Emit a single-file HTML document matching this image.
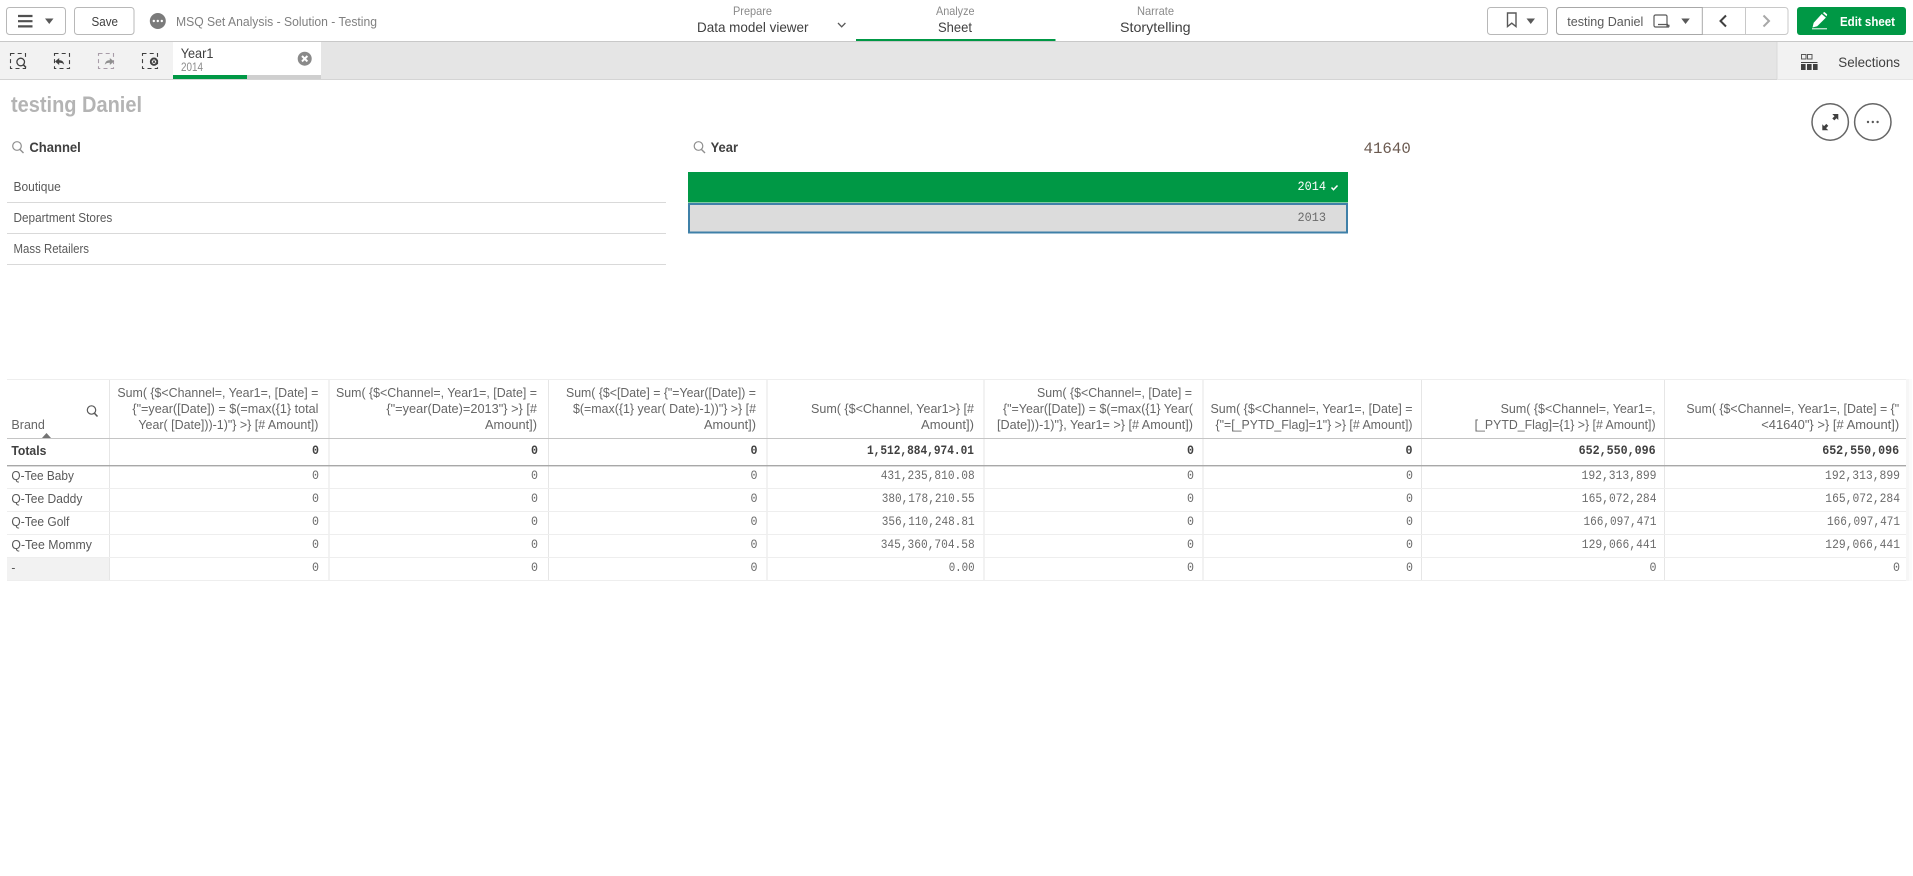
<!DOCTYPE html>
<html lang="en">
<head>
<meta charset="utf-8">
<title>MSQ Set Analysis - Solution - Testing</title>
<style>
html,body{margin:0;padding:0;background:#fff;width:1913px;height:876px;overflow:hidden}
svg{display:block}
text{font-family:"Liberation Sans",sans-serif;fill:#595959;font-size:13px;white-space:pre}
.n{font-family:"Liberation Mono",monospace;font-size:13px;fill:#6b6b6b;text-anchor:end}
.nb{font-family:"Liberation Mono",monospace;font-size:13px;font-weight:700;fill:#404040;text-anchor:end}
.h{fill:#666;text-anchor:end}
.k{fill:#404040}
</style>
</head>
<body>
<svg width="1913" height="876" viewBox="0 0 1913 876" xmlns="http://www.w3.org/2000/svg">
<rect width="1913" height="876" fill="#fff"/>

<!-- top bar -->
<rect x="6.5" y="7.5" width="59" height="27" rx="3" fill="#fff" stroke="#b8b8b8"/>
<path d="M18 16h14.5M18 21.2h14.5M18 26.4h14.5" stroke="#505050" stroke-width="2.2" fill="none"/>
<path d="M45 18.5h8.5l-4.25 5.5z" fill="#595959"/>
<rect x="74.5" y="7.5" width="59.5" height="27" rx="3" fill="#fff" stroke="#b8b8b8"/>
<text x="91.5" y="26" textLength="26.5" lengthAdjust="spacingAndGlyphs" class="k">Save</text>
<circle cx="157.8" cy="21" r="8" fill="#7b7b7b"/>
<circle cx="153.8" cy="21" r="1.2" fill="#fff"/><circle cx="157.8" cy="21" r="1.2" fill="#fff"/><circle cx="161.8" cy="21" r="1.2" fill="#fff"/>
<text x="176" y="26" textLength="201" lengthAdjust="spacingAndGlyphs" style="fill:#808080">MSQ Set Analysis - Solution - Testing</text>

<text x="733" y="15" textLength="39" lengthAdjust="spacingAndGlyphs" style="font-size:12px;fill:#8a8a8a">Prepare</text>
<text x="697" y="32" textLength="111.5" lengthAdjust="spacingAndGlyphs" style="font-size:14px" class="k">Data model viewer</text>
<path d="M838 23l3.7 3.8 3.7-3.8" fill="none" stroke="#595959" stroke-width="1.3"/>
<text x="936" y="15" textLength="38.5" lengthAdjust="spacingAndGlyphs" style="font-size:12px;fill:#8a8a8a">Analyze</text>
<text x="938" y="32" textLength="34" lengthAdjust="spacingAndGlyphs" style="font-size:14px" class="k">Sheet</text>
<text x="1137" y="15" textLength="37" lengthAdjust="spacingAndGlyphs" style="font-size:12px;fill:#8a8a8a">Narrate</text>
<text x="1120" y="32" textLength="70.6" lengthAdjust="spacingAndGlyphs" style="font-size:14px" class="k">Storytelling</text>
<rect x="856" y="39" width="199.5" height="2.4" fill="#009845"/>

<rect x="1487.5" y="7.5" width="60" height="27" rx="3" fill="#fff" stroke="#b8b8b8"/>
<path d="M1507.5 13h8.5v13.6l-4.25-3.4-4.25 3.4z" fill="none" stroke="#595959" stroke-width="1.4"/>
<path d="M1526.5 18.5h8.5l-4.25 5.5z" fill="#595959"/>
<rect x="1556.5" y="7.5" width="231.5" height="27" rx="3" fill="#fff" stroke="#c8c8c8"/>
<path d="M1556.5 10.5a3 3 0 0 1 3-3h142.8v27h-142.8a3 3 0 0 1-3-3z" fill="none" stroke="#a8a8a8"/>
<path d="M1745.5 7.5v27" stroke="#c8c8c8"/>
<text x="1567.3" y="26" textLength="76" lengthAdjust="spacingAndGlyphs" style="fill:#595959">testing Daniel</text>
<path d="M1667 26v-9.5a1.5 1.5 0 0 0-1.5-1.5h-10a1.5 1.5 0 0 0-1.5 1.5v9a1.5 1.5 0 0 0 1.5 1.5h13a1.5 1.5 0 0 0 .3-1.8z M1658 24.5h10" fill="none" stroke="#595959" stroke-width="1.2"/>
<path d="M1681.3 18.5h8.5l-4.25 5.5z" fill="#595959"/>
<path d="M1726 15.5l-5.5 5.5 5.5 5.5" fill="none" stroke="#404040" stroke-width="2"/>
<path d="M1763.5 15.5l5.5 5.5-5.5 5.5" fill="none" stroke="#a8a8a8" stroke-width="2"/>
<rect x="1797" y="7" width="109" height="28" rx="3" fill="#009845"/>
<path d="M1812.5 27.5l1.2-4.8 8-8.7 4.2 3.6-8.7 8.7z" fill="#fff"/>
<path d="M1822.8 13l1.6-1 2.8 2.4-.6 2z" fill="#fff"/>
<path d="M1812 28.8h15" stroke="#fff" stroke-width="1"/>
<text x="1840" y="26" textLength="55" lengthAdjust="spacingAndGlyphs" font-weight="700" style="fill:#fff">Edit sheet</text>

<rect x="0" y="41" width="1913" height="1.2" fill="#c8c8c8"/>

<!-- toolbar -->
<rect x="0" y="42" width="1913" height="37" fill="#e5e5e5"/>
<rect x="0" y="42" width="173" height="37" fill="#f2f2f2"/>
<rect x="1777" y="42" width="136" height="37" fill="#f2f2f2"/>
<rect x="1776.5" y="42" width="1" height="37" fill="#d9d9d9"/>
<rect x="0" y="79" width="1777" height="1" fill="#d4d4d4"/>
<rect x="1777" y="79" width="136" height="1" fill="#e6e6e6"/>

<g fill="none" stroke="#3f3f3f" stroke-width="1.1" stroke-dasharray="4 3.2">
<rect x="10.5" y="53.5" width="15" height="15"/>
<rect x="54.5" y="53.5" width="15" height="15"/>
<rect x="142.5" y="53.5" width="15" height="15"/>
</g>
<rect x="98.5" y="53.5" width="15" height="15" fill="none" stroke="#a89ca8" stroke-width="1.1" stroke-dasharray="4 3.2"/>
<rect x="15" y="58" width="12" height="8.5" fill="#f2f2f2"/>
<circle cx="20.7" cy="62" r="3.8" fill="none" stroke="#404040" stroke-width="1.3"/>
<path d="M23.4 64.8l2.6 2.7" stroke="#404040" stroke-width="1.5"/>
<path d="M55 61.5l4.2-3.5v2.2c2.8 0 4.5 1.2 5 4.6-1.2-1.6-2.8-2-5-2V65z" fill="#404040"/>
<path d="M114 61.5l-4.2-3.5v2.2c-2.8 0-4.5 1.2-5 4.6 1.2-1.6 2.8-2 5-2V65z" fill="#8f8f8f"/>
<circle cx="154" cy="61.7" r="3.2" fill="#fff" stroke="#404040" stroke-width="1.9"/>
<path d="M152.7 60.4l2.6 2.6M155.3 60.4l-2.6 2.6" stroke="#404040" stroke-width=".9"/>

<rect x="173" y="42" width="148" height="37" fill="#fff"/>
<rect x="173" y="75" width="148" height="4" fill="#cfcfcf"/>
<rect x="173" y="75" width="74" height="4" fill="#009845"/>
<text x="180.7" y="58" textLength="32.7" lengthAdjust="spacingAndGlyphs" style="font-size:14px;fill:#404040">Year1</text>
<text x="181" y="71" textLength="22" lengthAdjust="spacingAndGlyphs" style="font-size:12px;fill:#8c8c8c">2014</text>
<circle cx="304.7" cy="58.7" r="7" fill="#8a8a8a"/>
<path d="M302 56l5.4 5.4M307.4 56L302 61.4" stroke="#fff" stroke-width="2"/>

<rect x="1801.5" y="54.5" width="4.5" height="4.5" fill="none" stroke="#595959"/>
<rect x="1807.5" y="54.5" width="4.5" height="4.5" fill="none" stroke="#595959"/>
<path d="M1801 62.5h16.5" stroke="#404040"/>
<rect x="1801" y="64" width="4.6" height="6" fill="#404040"/>
<rect x="1807" y="64" width="4.6" height="6" fill="#404040"/>
<rect x="1813" y="64" width="4.6" height="6" fill="#404040"/>
<text x="1838.3" y="67" textLength="61.7" lengthAdjust="spacingAndGlyphs" style="font-size:14px" class="k">Selections</text>

<!-- title -->
<text x="11" y="112" textLength="131" lengthAdjust="spacingAndGlyphs" font-weight="700" style="font-size:22px;fill:#b4b4b4">testing Daniel</text>

<circle cx="1830.2" cy="122" r="18.2" fill="#fff" stroke="#666" stroke-width="1.5"/>
<circle cx="1872.8" cy="122" r="18.2" fill="#fff" stroke="#666" stroke-width="1.5"/>
<path d="M1832.3 114h6v6l-1.8-1.8-2.2 2.2-2-2 2.2-2.2z" fill="#404040"/>
<path d="M1828.3 130.3h-6v-6l1.8 1.8 2.2-2.2 2 2-2.2 2.2z" fill="#404040"/>
<circle cx="1868" cy="122" r="1.2" fill="#595959"/><circle cx="1872.8" cy="122" r="1.2" fill="#595959"/><circle cx="1877.6" cy="122" r="1.2" fill="#595959"/>

<!-- channel filter -->
<circle cx="17" cy="146" r="4.3" fill="none" stroke="#8f8f8f" stroke-width="1.2"/>
<path d="M20 149.5l3.5 3.5" stroke="#8f8f8f" stroke-width="1.4"/>
<text x="29.4" y="152" textLength="51.4" lengthAdjust="spacingAndGlyphs" font-weight="700" style="font-size:14px" class="k">Channel</text>
<text x="13.5" y="191" textLength="47.3" lengthAdjust="spacingAndGlyphs">Boutique</text>
<text x="13.5" y="222" textLength="98.8" lengthAdjust="spacingAndGlyphs">Department Stores</text>
<text x="13.5" y="253" textLength="75.5" lengthAdjust="spacingAndGlyphs">Mass Retailers</text>
<rect x="7" y="202" width="659" height="1" fill="#d9d9d9"/>
<rect x="7" y="233" width="659" height="1" fill="#d9d9d9"/>
<rect x="7" y="264" width="659" height="1" fill="#d9d9d9"/>

<!-- year filter -->
<circle cx="698.5" cy="146" r="4.3" fill="none" stroke="#8f8f8f" stroke-width="1.2"/>
<path d="M701.5 149.5l3.5 3.5" stroke="#8f8f8f" stroke-width="1.4"/>
<text x="710.6" y="152" textLength="27.4" lengthAdjust="spacingAndGlyphs" font-weight="700" style="font-size:14px" class="k">Year</text>
<rect x="688" y="172" width="660" height="30.5" fill="#009845"/>
<rect x="689" y="204" width="658" height="28.5" fill="#dcdcdc" stroke="#3f80a8" stroke-width="2"/>
<text x="1326" y="190" textLength="28.5" lengthAdjust="spacingAndGlyphs" class="n" style="fill:#fff">2014</text>
<path d="M1331.5 187.5l2 2.2 4-4.2" fill="none" stroke="#fff" stroke-width="1.5"/>
<text x="1326" y="221" textLength="28.5" lengthAdjust="spacingAndGlyphs" class="n">2013</text>

<text x="1410.8" y="153" textLength="47.3" lengthAdjust="spacingAndGlyphs" class="n" style="font-size:16px;fill:#6b5a50">41640</text>

<!-- table -->
<rect x="7" y="558" width="102" height="22" fill="#f2f2f2"/>
<rect x="7" y="379" width="1899" height="1" fill="#eeeeee"/>
<g fill="#e6e6e6">
<rect x="109" y="380" width="1" height="200"/>
<rect x="328.5" y="380" width="1" height="200"/>
<rect x="548" y="380" width="1" height="200"/>
<rect x="766.5" y="380" width="1" height="200"/>
<rect x="983.5" y="380" width="1" height="200"/>
<rect x="1202.5" y="380" width="1" height="200"/>
<rect x="1421" y="380" width="1" height="200"/>
<rect x="1664" y="380" width="1" height="200"/>
</g>
<rect x="7" y="438" width="1899" height="1" fill="#c4c4c4"/>
<rect x="7" y="465" width="1899" height="1.4" fill="#a8a8a8"/>
<g fill="#eeeeee">
<rect x="7" y="488" width="1899" height="1"/>
<rect x="7" y="511" width="1899" height="1"/>
<rect x="7" y="534" width="1899" height="1"/>
<rect x="7" y="557" width="1899" height="1"/>
<rect x="7" y="580" width="1899" height="1"/>
</g>
<rect x="1906" y="379" width="3" height="202" fill="#f6f6f6"/>
<rect x="1909" y="379" width="3" height="202" fill="#fbfbfb"/>

<text x="11.4" y="429" textLength="33.5" lengthAdjust="spacingAndGlyphs" style="fill:#666">Brand</text>
<path d="M42 438l4.5-5 4.5 5z" fill="#737373"/>
<circle cx="91.5" cy="410" r="4.2" fill="none" stroke="#595959" stroke-width="1.2"/>
<path d="M94.5 413.3l3 3.2" stroke="#595959" stroke-width="1.5"/>

<text class="h" x="318.4" y="397" textLength="201" lengthAdjust="spacingAndGlyphs">Sum( {$&lt;Channel=, Year1=, [Date] =</text>
<text class="h" x="318.4" y="413" textLength="186" lengthAdjust="spacingAndGlyphs">{"=year([Date]) = $(=max({1} total</text>
<text class="h" x="318.4" y="429" textLength="180" lengthAdjust="spacingAndGlyphs">Year( [Date]))-1)"} &gt;} [# Amount])</text>

<text class="h" x="537" y="397" textLength="201" lengthAdjust="spacingAndGlyphs">Sum( {$&lt;Channel=, Year1=, [Date] =</text>
<text class="h" x="537" y="413" textLength="150.6" lengthAdjust="spacingAndGlyphs">{"=year(Date)=2013"} &gt;} [#</text>
<text class="h" x="537" y="429" textLength="52" lengthAdjust="spacingAndGlyphs">Amount])</text>

<text class="h" x="756" y="397" textLength="190" lengthAdjust="spacingAndGlyphs">Sum( {$&lt;[Date] = {"=Year([Date]) =</text>
<text class="h" x="756" y="413" textLength="183" lengthAdjust="spacingAndGlyphs">$(=max({1} year( Date)-1))"} &gt;} [#</text>
<text class="h" x="756" y="429" textLength="52" lengthAdjust="spacingAndGlyphs">Amount])</text>

<text class="h" x="974" y="413" textLength="163" lengthAdjust="spacingAndGlyphs">Sum( {$&lt;Channel, Year1&gt;} [#</text>
<text class="h" x="974" y="429" textLength="53" lengthAdjust="spacingAndGlyphs">Amount])</text>

<text class="h" x="1192" y="397" textLength="155" lengthAdjust="spacingAndGlyphs">Sum( {$&lt;Channel=, [Date] =</text>
<text class="h" x="1193" y="413" textLength="190" lengthAdjust="spacingAndGlyphs">{"=Year([Date]) = $(=max({1} Year(</text>
<text class="h" x="1193" y="429" textLength="196" lengthAdjust="spacingAndGlyphs">[Date]))-1)"}, Year1= &gt;} [# Amount])</text>

<text class="h" x="1412.5" y="413" textLength="202" lengthAdjust="spacingAndGlyphs">Sum( {$&lt;Channel=, Year1=, [Date] =</text>
<text class="h" x="1412.5" y="429" textLength="197" lengthAdjust="spacingAndGlyphs">{"=[_PYTD_Flag]=1"} &gt;} [# Amount])</text>

<text class="h" x="1655.6" y="413" textLength="155" lengthAdjust="spacingAndGlyphs">Sum( {$&lt;Channel=, Year1=,</text>
<text class="h" x="1655.6" y="429" textLength="181" lengthAdjust="spacingAndGlyphs">[_PYTD_Flag]={1} &gt;} [# Amount])</text>

<text class="h" x="1899.2" y="413" textLength="212.8" lengthAdjust="spacingAndGlyphs">Sum( {$&lt;Channel=, Year1=, [Date] = {"</text>
<text class="h" x="1899.2" y="429" textLength="138" lengthAdjust="spacingAndGlyphs">&lt;41640"} &gt;} [# Amount])</text>

<text x="11.4" y="455" textLength="35" lengthAdjust="spacingAndGlyphs" font-weight="700" class="k">Totals</text>
<text x="11.4" y="480" textLength="62.5" lengthAdjust="spacingAndGlyphs">Q-Tee Baby</text>
<text x="11.4" y="503" textLength="71" lengthAdjust="spacingAndGlyphs">Q-Tee Daddy</text>
<text x="11.4" y="526" textLength="58" lengthAdjust="spacingAndGlyphs">Q-Tee Golf</text>
<text x="11.4" y="549" textLength="80.5" lengthAdjust="spacingAndGlyphs">Q-Tee Mommy</text>
<text x="11.4" y="572" textLength="4" lengthAdjust="spacingAndGlyphs">-</text>

<!-- totals -->
<text class="nb" x="319" y="454" textLength="7" lengthAdjust="spacingAndGlyphs">0</text>
<text class="nb" x="538" y="454" textLength="7" lengthAdjust="spacingAndGlyphs">0</text>
<text class="nb" x="757.5" y="454" textLength="7" lengthAdjust="spacingAndGlyphs">0</text>
<text class="nb" x="974" y="454" textLength="107" lengthAdjust="spacingAndGlyphs">1,512,884,974.01</text>
<text class="nb" x="1194" y="454" textLength="7" lengthAdjust="spacingAndGlyphs">0</text>
<text class="nb" x="1412.5" y="454" textLength="7" lengthAdjust="spacingAndGlyphs">0</text>
<text class="nb" x="1655.6" y="454" textLength="77" lengthAdjust="spacingAndGlyphs">652,550,096</text>
<text class="nb" x="1899.2" y="454" textLength="77" lengthAdjust="spacingAndGlyphs">652,550,096</text>

<!-- row 1 -->
<text class="n" x="319" y="479" textLength="7" lengthAdjust="spacingAndGlyphs">0</text>
<text class="n" x="538" y="479" textLength="7" lengthAdjust="spacingAndGlyphs">0</text>
<text class="n" x="757.5" y="479" textLength="7" lengthAdjust="spacingAndGlyphs">0</text>
<text class="n" x="974.7" y="479" textLength="94" lengthAdjust="spacingAndGlyphs">431,235,810.08</text>
<text class="n" x="1194" y="479" textLength="7" lengthAdjust="spacingAndGlyphs">0</text>
<text class="n" x="1413" y="479" textLength="7" lengthAdjust="spacingAndGlyphs">0</text>
<text class="n" x="1656.5" y="479" textLength="75" lengthAdjust="spacingAndGlyphs">192,313,899</text>
<text class="n" x="1900" y="479" textLength="75" lengthAdjust="spacingAndGlyphs">192,313,899</text>
<!-- row 2 -->
<text class="n" x="319" y="502" textLength="7" lengthAdjust="spacingAndGlyphs">0</text>
<text class="n" x="538" y="502" textLength="7" lengthAdjust="spacingAndGlyphs">0</text>
<text class="n" x="757.5" y="502" textLength="7" lengthAdjust="spacingAndGlyphs">0</text>
<text class="n" x="974.7" y="502" textLength="93" lengthAdjust="spacingAndGlyphs">380,178,210.55</text>
<text class="n" x="1194" y="502" textLength="7" lengthAdjust="spacingAndGlyphs">0</text>
<text class="n" x="1413" y="502" textLength="7" lengthAdjust="spacingAndGlyphs">0</text>
<text class="n" x="1656.5" y="502" textLength="74.7" lengthAdjust="spacingAndGlyphs">165,072,284</text>
<text class="n" x="1900" y="502" textLength="74.7" lengthAdjust="spacingAndGlyphs">165,072,284</text>
<!-- row 3 -->
<text class="n" x="319" y="525" textLength="7" lengthAdjust="spacingAndGlyphs">0</text>
<text class="n" x="538" y="525" textLength="7" lengthAdjust="spacingAndGlyphs">0</text>
<text class="n" x="757.5" y="525" textLength="7" lengthAdjust="spacingAndGlyphs">0</text>
<text class="n" x="974.7" y="525" textLength="93" lengthAdjust="spacingAndGlyphs">356,110,248.81</text>
<text class="n" x="1194" y="525" textLength="7" lengthAdjust="spacingAndGlyphs">0</text>
<text class="n" x="1413" y="525" textLength="7" lengthAdjust="spacingAndGlyphs">0</text>
<text class="n" x="1656.5" y="525" textLength="73" lengthAdjust="spacingAndGlyphs">166,097,471</text>
<text class="n" x="1900" y="525" textLength="73" lengthAdjust="spacingAndGlyphs">166,097,471</text>
<!-- row 4 -->
<text class="n" x="319" y="548" textLength="7" lengthAdjust="spacingAndGlyphs">0</text>
<text class="n" x="538" y="548" textLength="7" lengthAdjust="spacingAndGlyphs">0</text>
<text class="n" x="757.5" y="548" textLength="7" lengthAdjust="spacingAndGlyphs">0</text>
<text class="n" x="974.7" y="548" textLength="94" lengthAdjust="spacingAndGlyphs">345,360,704.58</text>
<text class="n" x="1194" y="548" textLength="7" lengthAdjust="spacingAndGlyphs">0</text>
<text class="n" x="1413" y="548" textLength="7" lengthAdjust="spacingAndGlyphs">0</text>
<text class="n" x="1656.5" y="548" textLength="74.7" lengthAdjust="spacingAndGlyphs">129,066,441</text>
<text class="n" x="1900" y="548" textLength="74.7" lengthAdjust="spacingAndGlyphs">129,066,441</text>
<!-- row 5 -->
<text class="n" x="319" y="571" textLength="7" lengthAdjust="spacingAndGlyphs">0</text>
<text class="n" x="538" y="571" textLength="7" lengthAdjust="spacingAndGlyphs">0</text>
<text class="n" x="757.5" y="571" textLength="7" lengthAdjust="spacingAndGlyphs">0</text>
<text class="n" x="974.7" y="571" textLength="26" lengthAdjust="spacingAndGlyphs">0.00</text>
<text class="n" x="1194" y="571" textLength="7" lengthAdjust="spacingAndGlyphs">0</text>
<text class="n" x="1413" y="571" textLength="7" lengthAdjust="spacingAndGlyphs">0</text>
<text class="n" x="1656.5" y="571" textLength="7" lengthAdjust="spacingAndGlyphs">0</text>
<text class="n" x="1900" y="571" textLength="7" lengthAdjust="spacingAndGlyphs">0</text>
</svg>
</body>
</html>
